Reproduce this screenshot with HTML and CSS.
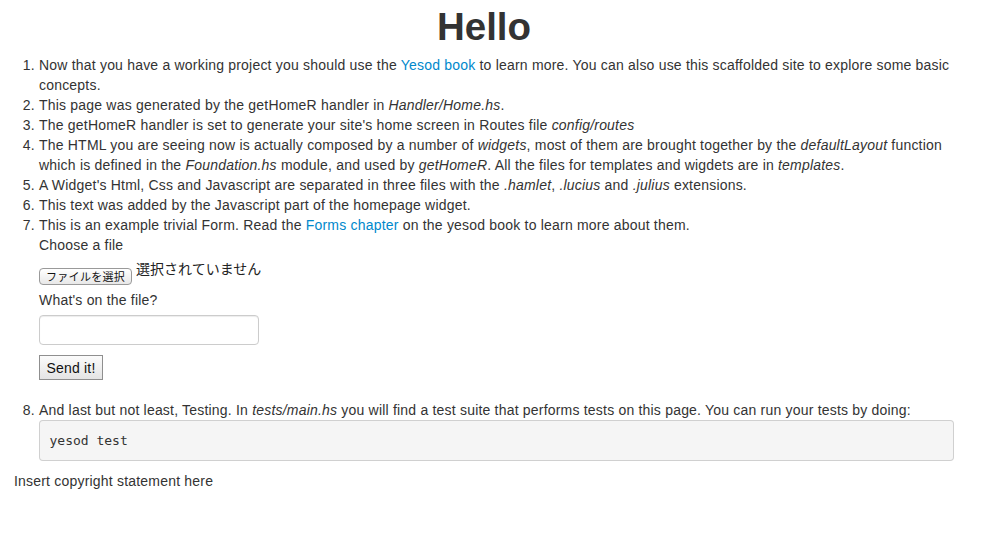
FILE: index.html
```html
<!DOCTYPE html>
<html lang="en">
<head>
<meta charset="utf-8">
<title>Hello</title>
<link rel="stylesheet" href="styles.css">
</head>
<body>
<div class="container">
  <h1 class="title">Hello</h1>
  <ol class="steps">
    <li>Now that you have a working project you should use the <a href="#">Yesod book</a> to learn more. You can also use this scaffolded site to explore some basic concepts.</li>
    <li>This page was generated by the getHomeR handler in <em>Handler/Home.hs</em>.</li>
    <li>The getHomeR handler is set to generate your site's home screen in Routes file <em>config/routes</em></li>
    <li>The HTML you are seeing now is actually composed by a number of <em>widgets</em>, most of them are brought together by the <em>defaultLayout</em> function which is defined in the <em>Foundation.hs</em> module, and used by <em>getHomeR</em>. All the files for templates and wigdets are in <em>templates</em>.</li>
    <li>A Widget's Html, Css and Javascript are separated in three files with the <em>.hamlet</em>, <em>.lucius</em> and <em>.julius</em> extensions.</li>
    <li>This text was added by the Javascript part of the homepage widget.</li>
    <li>This is an example trivial Form. Read the <a href="#">Forms chapter</a> on the yesod book to learn more about them.
      <form class="form">
        <div class="group">
          <label class="label">Choose a file</label>
          <div class="file-row">
            <span class="file-btn">ファイルを選択</span>
            <span class="file-status">選択されていません</span>
          </div>
        </div>
        <div class="group">
          <label class="label">What's on the file?</label>
          <input class="text-input" type="text">
        </div>
        <button class="submit" type="button">Send it!</button>
      </form>
    </li>
    <li>And last but not least, Testing. In <em>tests/main.hs</em> you will find a test suite that performs tests on this page. You can run your tests by doing: <pre class="code">yesod test</pre></li>
  </ol>
  <footer class="footer">Insert copyright statement here</footer>
</div>
</body>
</html>
```
FILE: styles.css
```css
html, body {
  margin: 0;
  padding: 0;
  background: #fff;
}
body {
  font-family: "Liberation Sans", Arial, "Noto Sans CJK JP", sans-serif;
  font-size: 14px;
  line-height: 20px;
  letter-spacing: 0.2px;
  color: #333;
}
.container {
  width: 940px;
  margin-left: 14px;
}
.title {
  margin: 7px 0 8px;
  font-size: 38.5px;
  line-height: 40px;
  font-weight: bold;
  letter-spacing: 0;
  text-align: center;
  color: #333;
}
.steps {
  margin: 0 0 10px 25px;
  padding: 0;
}
.steps a {
  color: #0088cc;
  text-decoration: none;
}
.form {
  margin: 0 0 20px;
}
.label {
  display: block;
  margin-bottom: 5px;
}
.file-row {
  display: flex;
  align-items: flex-start;
  height: 30px;
}
.file-btn {
  display: inline-block;
  box-sizing: border-box;
  height: 17px;
  margin-top: 8px;
  padding: 0 6px;
  font-family: "Noto Sans CJK JP", sans-serif;
  font-size: 11px;
  line-height: 15px;
  letter-spacing: 0.3px;
  color: #111;
  border: 1px solid #9a9a9a;
  border-radius: 4px;
  background: linear-gradient(#ffffff, #e8e8e8);
}
.file-status {
  margin-left: 4px;
  margin-top: -2px;
  font-family: "Noto Sans CJK JP", sans-serif;
  font-size: 14px;
  line-height: 20px;
  letter-spacing: 0;
  color: #222;
}
.text-input {
  display: block;
  box-sizing: border-box;
  width: 220px;
  height: 30px;
  margin: 0 0 10px;
  padding: 4px 6px;
  font-size: 14px;
  border: 1px solid #ccc;
  border-radius: 4px;
  background: #fff;
  box-shadow: inset 0 1px 1px rgba(0,0,0,0.075);
}
.submit {
  display: block;
  box-sizing: border-box;
  width: 64px;
  height: 25px;
  margin: 0;
  padding: 0 6px;
  font-family: "Liberation Sans", Arial, sans-serif;
  font-size: 14px;
  letter-spacing: 0.2px;
  color: #111;
  border: 1px solid #8f8f8f;
  border-radius: 0;
  background: linear-gradient(#fbfbfb, #e4e4e4);
}
.code {
  display: block;
  margin: 0 0 10px;
  padding: 9.5px;
  font-family: "DejaVu Sans Mono", Menlo, monospace;
  font-size: 13px;
  line-height: 20px;
  letter-spacing: 0;
  color: #333;
  background: #f5f5f5;
  border: 1px solid rgba(0,0,0,0.15);
  border-radius: 4px;
  white-space: pre;
}
.footer {
  margin: 0;
}
```
